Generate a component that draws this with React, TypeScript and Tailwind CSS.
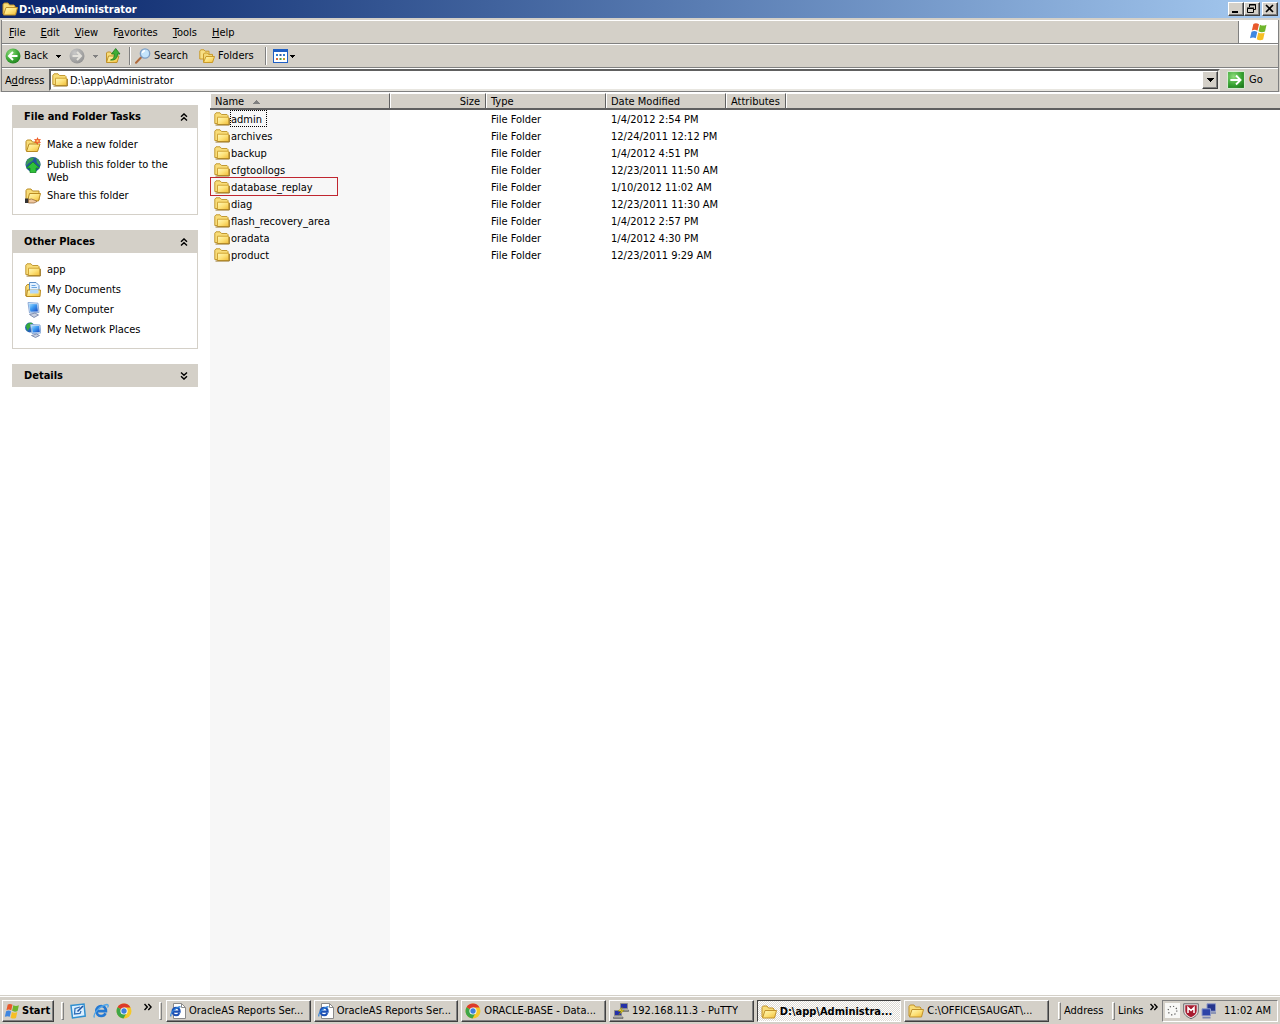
import { useState, type ReactNode } from "react";
import { clsx } from "clsx";

const RAISED =
  "border border-t-white border-l-white border-r-[#404040] border-b-[#404040] bg-[#d4d0c8] shadow-[inset_-1px_-1px_0_#808080]";

const MENUS = [
  ["", "F", "ile"],
  ["", "E", "dit"],
  ["", "V", "iew"],
  ["F", "a", "vorites"],
  ["", "T", "ools"],
  ["", "H", "elp"],
];

const FOLDERS = [
  { name: "admin", modified: "1/4/2012 2:54 PM", focused: true },
  { name: "archives", modified: "12/24/2011 12:12 PM" },
  { name: "backup", modified: "1/4/2012 4:51 PM" },
  { name: "cfgtoollogs", modified: "12/23/2011 11:50 AM" },
  { name: "database_replay", modified: "1/10/2012 11:02 AM", marked: true },
  { name: "diag", modified: "12/23/2011 11:30 AM" },
  { name: "flash_recovery_area", modified: "1/4/2012 2:57 PM" },
  { name: "oradata", modified: "1/4/2012 4:30 PM" },
  { name: "product", modified: "12/23/2011 9:29 AM" },
];

/* ---------- icons ---------- */

/** Gradients shared by every icon on the page. */
function IconDefs() {
  return (
    <svg width="0" height="0" className="absolute" aria-hidden>
      <defs>
        <linearGradient id="yellow" x1="0" y1="0" x2="1" y2="1">
          <stop offset="0" stopColor="#fff9bc" />
          <stop offset="0.5" stopColor="#fde27a" />
          <stop offset="1" stopColor="#efbb36" />
        </linearGradient>
        <radialGradient id="green" cx="0.35" cy="0.3" r="0.8">
          <stop offset="0" stopColor="#8fdc7c" />
          <stop offset="0.6" stopColor="#3aa534" />
          <stop offset="1" stopColor="#1d7a1c" />
        </radialGradient>
        <radialGradient id="grey" cx="0.35" cy="0.3" r="0.8">
          <stop offset="0" stopColor="#c8c8c8" />
          <stop offset="1" stopColor="#8f8f8f" />
        </radialGradient>
        <linearGradient id="screen" x1="0" y1="0" x2="1" y2="1">
          <stop offset="0" stopColor="#a8e0ff" />
          <stop offset="0.45" stopColor="#3f9cf2" />
          <stop offset="1" stopColor="#1648c0" />
        </linearGradient>
      </defs>
    </svg>
  );
}

function Icon({ children, className = "h-4 w-4" }: { children: ReactNode; className?: string }) {
  return (
    <svg viewBox="0 0 16 16" className={clsx("shrink-0", className)} fill="none" aria-hidden>
      {children}
    </svg>
  );
}

function FolderIcon() {
  return (
    <Icon>
      <path d="M.8 12.500V3.200L2 1.800h4l1.500 1.700H13l1 1v8z" fill="#f8dc78" stroke="#c29a34" />
      <path d="M3.500 6.200h11.300v7.300H3.500z" fill="url(#yellow)" stroke="#d0a436" />
      <path d="M1.500 14h13.800V7" stroke="#96701c" />
    </Icon>
  );
}

function OpenFolderIcon() {
  return (
    <Icon>
      <path d="M1 13V3.500L2.200 2H6l1.500 2H12l1 1v8z" fill="#f8dc78" stroke="#c0912a" />
      <path d="M4 6.500h11.500L13.500 14H1.500z" fill="url(#yellow)" stroke="#c0912a" />
    </Icon>
  );
}

function FoldersIcon() {
  return (
    <Icon>
      <path d="M.8 11V2.800L2 1.800h3l1.200 1.400H10V11z" fill="#f7df85" stroke="#c99a2a" />
      <path d="M4.500 14V6l1-1h3l1 1.400h4V14z" fill="#f3d877" stroke="#c99a2a" />
      <path d="M7 8.500h8.500L13.500 14.500h-9z" fill="url(#yellow)" stroke="#c99a2a" />
    </Icon>
  );
}

function NewFolderIcon() {
  return (
    <Icon>
      <path d="M1 13.500V4.500L2.200 3H6l1.500 2H12v8.500z" fill="#f8dc78" stroke="#b98b22" />
      <path d="M4 7h11l-2.500 7.500h-11z" fill="url(#yellow)" stroke="#b98b22" />
      <path d="M12.500 0l1 2.300 2.500-.3-1.500 2 1.500 2-2.600-.2-1 2.200-1-2.200-2.400.2 1.500-2L9 2l2.500.3z" fill="#ee5a24" />
      <circle cx="12.500" cy="4" r="1.200" fill="#ffc46a" />
    </Icon>
  );
}

function ShareFolderIcon() {
  return (
    <Icon>
      <path d="M1 13V2.500L2.200 1H6l1.500 2H14v9z" fill="#f8dc78" stroke="#b98b22" />
      <path d="M4.500 5.500H15.500L13.500 13H2.500z" fill="url(#yellow)" stroke="#b98b22" />
      <path d="M0 10.500h3.500v4.500H0z" fill="#333" />
      <path d="M3.500 11.500l3-.5 4 1.500 1.500 1-3 1.500H3.500z" fill="#f0c9a0" stroke="#8a5b2c" strokeWidth="0.700" />
    </Icon>
  );
}

function UpFolderIcon() {
  return (
    <Icon>
      <path d="M1.500 14V5l1-1h3l1 1.500H11V14z" fill="#f8dc78" stroke="#c0912a" />
      <path d="M3.500 8H14l-2 6.500H1.500z" fill="url(#yellow)" stroke="#c0912a" />
      <path d="M5.500 12c3-.5 4-3 3.800-6H6.500l4.200-5.500L15 6h-2.500c0 4-2 6.500-7 6z" fill="#3fae35" stroke="#1d7a1c" strokeWidth="0.800" />
    </Icon>
  );
}

function ArrowBall({ fill, flip }: { fill: string; flip?: boolean }) {
  return (
    <Icon>
      <circle cx="8" cy="8" r="7.500" fill={fill} />
      <path
        d={flip ? "M3.500 8H12M8 4l4 4-4 4" : "M12.500 8H4M8 4L4 8l4 4"}
        stroke={flip ? "#e4e2dc" : "#fff"}
        strokeWidth="2"
      />
    </Icon>
  );
}

function SearchIcon() {
  return (
    <Icon>
      <path d="M6 9.500L1 14.800" stroke="#b06a3c" strokeWidth="2" strokeLinecap="round" />
      <circle cx="10" cy="5.500" r="4.700" fill="#c4e4fb" stroke="#7f9fc4" strokeWidth="1.300" />
      <path d="M7.500 5a2.600 2.600 0 012.500-2.300" stroke="#fff" strokeWidth="1.500" />
    </Icon>
  );
}

function ViewsIcon() {
  return (
    <Icon>
      <rect x="0.5" y="1.5" width="14" height="13" fill="#fff" stroke="#1f5fc4" />
      <path d="M0 1h15v3H0z" fill="#1f5fc4" />
      <path d="M3 6h2v2H3zM10 6h2v2h-2z" fill="#2f7fd0" />
      <path d="M6.500 6h2v2h-2z" fill="#3a5a9c" />
      <path d="M3 10h2v2H3z" fill="#d86a3c" />
      <path d="M6.500 10h2v2h-2z" fill="#3fa045" />
      <path d="M10 10h2v2h-2z" fill="#c9a02a" />
    </Icon>
  );
}

function WindowsFlag({ className }: { className?: string }) {
  return (
    <Icon className={className}>
      <path d="M3.500 1.500C5 .6 6.500.8 8 1.700L6.800 7C5.300 6 3.900 6 2.300 6.800z" fill="#e8592b" />
      <path d="M8.800 2.200c1.600.9 3.300.9 5.200 0L12.800 7.500c-1.800.9-3.500.8-5.200-.1z" fill="#6fb52c" />
      <path d="M2 7.800c1.600-.9 3.200-.8 4.600.1L5.400 13C4 12.200 2.500 12.200.8 13z" fill="#3f87e0" />
      <path d="M7.400 8.400c1.700.9 3.300.9 5.100.1L11.300 14c-1.800.9-3.500.8-5.100-.2z" fill="#f6bf25" />
    </Icon>
  );
}

function GlobeUpIcon() {
  return (
    <Icon>
      <circle cx="8" cy="7.500" r="7.500" fill="#24569c" />
      <path d="M1.500 4C3.500 1 7 .2 9 .7L7.500 4 4 6 .8 9zM11 1c3 1.500 4.800 4.500 4.400 8l-3.400-3z" fill="#3a9c56" />
      <path d="M8 5l6.500 6H11v4.500H5V11H1.500z" fill="#30c03a" stroke="#128a1e" strokeWidth="0.800" />
    </Icon>
  );
}

function DocumentsIcon() {
  return (
    <Icon>
      <path d="M.8 14V4.500l1.500-2H6V14z" fill="#f8dc78" stroke="#b98b22" />
      <path d="M4.500.5H11l3 3V10H4.500z" fill="#e4f2ff" stroke="#5c8fc8" />
      <path d="M6.500 3.500h4M6.500 5.500h5.500" stroke="#6aa5e0" />
      <path d="M2.500 8h13l-.500 6.500H1.500z" fill="url(#yellow)" stroke="#b98b22" />
      <path d="M5 7.500h8.500v4H5z" fill="#b4d8f8" />
    </Icon>
  );
}

function ComputerIcon() {
  return (
    <Icon>
      <path d="M3 .5l10 .7 1 9.300-9.500.5z" fill="#dce8f8" stroke="#8cacd8" />
      <path d="M4 1.700l8.100.5.800 7.200-7.500.4z" fill="url(#screen)" />
      <path d="M4.500 12.500l5.500-1.500 3.500 2-4.500 2.500z" fill="#c8d0e0" stroke="#6c7ca4" strokeWidth="0.800" />
    </Icon>
  );
}

function NetworkIcon() {
  return (
    <Icon>
      <circle cx="5" cy="5.500" r="4.900" fill="#2462b8" />
      <path d="M.8 4C2.500.8 5 .2 7.500 1.200L5.500 4.500 2.500 9z" fill="#36a83c" />
      <path d="M5.500 2.500l9.500.5.800 8-8.800.5z" fill="#dce8f8" stroke="#8cacd8" />
      <path d="M6.500 3.500l7.700.4.600 6.200-7.100.4z" fill="url(#screen)" />
      <path d="M6.500 13.500l5-1.500 3 1.500-4 2z" fill="#c8d0e0" stroke="#6c7ca4" strokeWidth="0.800" />
    </Icon>
  );
}

function IeIcon() {
  return (
    <Icon>
      <path d="M3.700 8.200h9.200C13 5 11 3 8.200 3 5.500 3 3.400 5.200 3.400 8s2 5 4.800 5c2.100 0 3.600-1 4.300-2.700" stroke="#2478d2" strokeWidth="2.700" />
      <path d="M1.500 14.500C-.5 12 5.500 3 14 1.500c1.500 0 1.500 1.500.5 3" stroke="#4fa4e8" strokeWidth="1.300" />
    </Icon>
  );
}

function IeDocIcon() {
  return (
    <Icon>
      <path d="M3.500.5h8l4 4v11h-12z" fill="#fff" stroke="#8a8a8a" />
      <path d="M11.500.5v4h4" stroke="#8a8a8a" />
      <g transform="translate(0 2.500) scale(0.750)">
        <path d="M3.700 8.200h9.200C13 5 11 3 8.200 3 5.500 3 3.400 5.200 3.400 8s2 5 4.800 5c2.100 0 3.600-1 4.300-2.700" stroke="#1c50b4" strokeWidth="2.800" />
        <path d="M1.500 14.500C-.5 12 5.500 3 14 1.500" stroke="#2d7fd6" strokeWidth="1.600" />
      </g>
    </Icon>
  );
}

function ShowDesktopIcon() {
  return (
    <Icon>
      <path d="M1 2.500L14 1l1.200 12L2.500 15z" fill="#dcefff" stroke="#2f8fd0" strokeWidth="1.500" />
      <path d="M10 4L5 5.500 4.500 11l5.500-.5L11 8" stroke="#2f6fb8" strokeWidth="1.300" />
      <path d="M7.500 8.500L13 3" stroke="#1c50a0" strokeWidth="1.600" />
    </Icon>
  );
}

function ChromeIcon() {
  return (
    <Icon>
      <circle cx="8" cy="8" r="7.500" fill="#f5c928" />
      <path d="M8 8L1.500 4.200A7.500 7.500 0 0114.500 4.500H8z" fill="#dc3a2b" />
      <path d="M8 8L1.500 4.250A7.500 7.500 0 007.500 15.500L10.500 10z" fill="#3fa648" />
      <circle cx="8" cy="8" r="3.600" fill="#fff" />
      <circle cx="8" cy="8" r="2.700" fill="#3f80dc" />
    </Icon>
  );
}

function PuttyIcon() {
  return (
    <Icon>
      <path d="M7.500.5h7v5h-7z" fill="#2430a8" stroke="#8a8a8a" />
      <path d="M7 7h8.500v1.500H7z" fill="#a8a8a8" stroke="#444" strokeWidth="0.500" />
      <path d="M1.500 7.500h7v5h-7z" fill="#2430a8" stroke="#8a8a8a" />
      <path d="M.5 14H10v1.500H.5z" fill="#a8a8a8" stroke="#444" strokeWidth="0.500" />
      <path d="M9.500 4L5 8.300h3.300L5.500 12l5.700-4.700H8z" fill="#ffe81c" stroke="#6d6208" strokeWidth="0.400" />
    </Icon>
  );
}

function TrayLoadingIcon() {
  return (
    <Icon>
      <path d="M0 0h15v15H0z" fill="#f8f8f6" />
      <circle cx="7.500" cy="7.500" r="4.300" stroke="#5a5a5a" strokeWidth="1.200" strokeDasharray="1.200 2.180" />
    </Icon>
  );
}

function ShieldIcon() {
  return (
    <Icon>
      <path d="M.7.800h14.600V8c0 3.500-3.300 6-7.300 7.700C4 14 .7 11.500.7 8z" fill="#f0e8e8" stroke="#6a6a6e" />
      <path d="M2.300 2.300h11.400V8c0 2.500-2.200 4.700-5.700 6.200C4.500 12.700 2.300 10.500 2.300 8z" fill="#a81c30" />
      <path d="M5 10V4.500l3 3 3-3V10" stroke="#fff" strokeWidth="1.500" />
    </Icon>
  );
}

function TrayNetworkIcon() {
  return (
    <Icon>
      <path d="M6 .8h8.500v7.400H6z" fill="#24348c" stroke="#8c98c8" />
      <path d="M9 10h6" stroke="#7c88b0" strokeWidth="1.600" />
      <path d="M1 5.800h8.500v7H1z" fill="#2c44a8" stroke="#8c98c8" />
      <path d="M1.500 14.700h8" stroke="#7c88b0" strokeWidth="1.600" />
    </Icon>
  );
}

function DownArrow({ className = "fill-black" }: { className?: string }) {
  return (
    <svg viewBox="0 0 7 4" className={clsx("h-1 w-[7px] shrink-0", className)} shapeRendering="crispEdges" aria-hidden>
      <path d="M0 0h7v1H0zM1 1h5v1H1zM2 2h3v1H2zM3 3h1v1H3z" />
    </svg>
  );
}

function Chevrons({ className }: { className?: string }) {
  return (
    <svg viewBox="0 0 8 8" className={clsx("h-2 w-2 shrink-0", className)} fill="none" stroke="#000" strokeWidth="1.400" aria-hidden>
      <path d="M1 3.700L4 .9l3 2.800M1 7.500l3-2.800 3 2.800" />
    </svg>
  );
}

/* ---------- window chrome ---------- */

function CaptionButton({ label, className, children }: { label: string; className?: string; children: ReactNode }) {
  return (
    <button type="button" aria-label={label} className={clsx("grid h-[14px] w-4 place-items-center", RAISED, className)}>
      <svg viewBox="0 0 12 10" className="h-[10px] w-3" fill="none" stroke="#000" aria-hidden>
        {children}
      </svg>
    </button>
  );
}

function TitleBar() {
  return (
    <header className="flex h-[18px] items-center bg-linear-to-r from-[#0a246a] to-[#a6caf0] px-[2px]">
      <OpenFolderIcon />
      <h1 className="ml-px flex-1 pt-px text-[11px] font-bold text-white">D:\app\Administrator</h1>
      <CaptionButton label="Minimize">
        <path d="M2 8h6" strokeWidth="2" />
      </CaptionButton>
      <CaptionButton label="Restore">
        <path d="M3.500 3V.500h6v5H7.500M3 1h7M1.500 4.500h6v4h-6zM1 4h7" />
      </CaptionButton>
      <CaptionButton label="Close" className="ml-[2px]">
        <path d="M2 1l7 7M9 1L2 8" strokeWidth="1.600" />
      </CaptionButton>
    </header>
  );
}

const BAND = "flex h-6 items-center border-t border-b border-t-white border-b-[#808080]";

function MenuBar() {
  return (
    <div className={BAND}>
      <nav className="flex flex-1 gap-[15px] pt-[2px] pl-[7px]">
        {MENUS.map(([before, key, after]) => (
          <button key={before + key + after} type="button">
            {before}
            <span className="underline">{key}</span>
            {after}
          </button>
        ))}
      </nav>
      <div className="grid h-full w-10 place-items-center border-l border-[#808080] bg-white">
        <WindowsFlag className="h-5 w-5" />
      </div>
    </div>
  );
}

function Divider() {
  return <span className="h-[18px] w-[2px] border-r border-l border-r-white border-l-[#808080]" />;
}

function Toolbar() {
  return (
    <div className={clsx(BAND, "pl-[3px]")}>
      <button type="button" className="flex w-[43px] items-center gap-[3px] whitespace-nowrap">
        <ArrowBall fill="url(#green)" />
        Back
      </button>
      <button type="button" aria-label="Back history" className="ml-[7px]">
        <DownArrow className="h-[3px] w-[5px] fill-black" />
      </button>
      <button type="button" aria-label="Forward" disabled className="ml-[7px]">
        <ArrowBall fill="url(#grey)" flip />
      </button>
      <button type="button" aria-label="Forward history" disabled className="ml-[7px]">
        <DownArrow className="h-[3px] w-[5px] fill-[#808080]" />
      </button>
      <button type="button" aria-label="Up" className="mr-2 ml-[6px]">
        <UpFolderIcon />
      </button>
      <Divider />
      <button type="button" className="ml-1 flex w-[53px] items-center gap-[3px] whitespace-nowrap">
        <SearchIcon />
        Search
      </button>
      <button type="button" className="mr-[10px] ml-[11px] flex w-[56px] items-center gap-[3px] whitespace-nowrap">
        <FoldersIcon />
        Folders
      </button>
      <Divider />
      <button type="button" aria-label="Views" className="ml-[6px] flex items-center">
        <ViewsIcon />
        <DownArrow className="h-[3px] w-[5px] fill-black" />
      </button>
    </div>
  );
}

function AddressBar() {
  const [path, setPath] = useState("D:\\app\\Administrator");
  return (
    <form className={clsx(BAND, "pl-[3px]")} onSubmit={(e) => e.preventDefault()}>
      <label htmlFor="address" className="w-[44px] pt-px whitespace-nowrap">
        A<span className="underline">d</span>dress
      </label>
      <div className="flex h-[22px] flex-1 items-center border-2 border-t-[#606060] border-r-[#e8e6e0] border-b-[#e8e6e0] border-l-[#606060] bg-white pl-px">
        <FolderIcon />
        <input
          id="address"
          value={path}
          onChange={(e) => setPath(e.target.value)}
          className="ml-[2px] min-w-0 flex-1 pt-[2px] outline-none"
        />
        <button type="button" aria-label="Address history" className={clsx("grid h-full w-4 place-items-center", RAISED)}>
          <DownArrow />
        </button>
      </div>
      <button type="submit" className="ml-[7px] flex w-[51px] items-center gap-1">
        <Icon className="h-[18px] w-[18px]">
          <path d="M.5.5h15v15H.5z" fill="url(#green)" stroke="#e4f4e0" strokeWidth="0.800" />
          <path d="M3 8h9M8 4l4 4-4 4" stroke="#fff" strokeWidth="1.700" />
        </Icon>
        Go
      </button>
    </form>
  );
}

/* ---------- task pane ---------- */

function Panel({ title, collapsed, children }: { title: string; collapsed?: boolean; children?: ReactNode }) {
  return (
    <section>
      <h2>
        <button type="button" className="flex h-[23px] w-full items-center justify-between bg-[#d4d0c8] pt-px pr-[10px] pl-3 text-[11px] font-bold">
          {title}
          <Chevrons className={collapsed ? "rotate-180" : ""} />
        </button>
      </h2>
      {children && (
        <ul className="space-y-1 border border-t-0 border-[#d4d0c8] px-3 pt-[9px] pb-[10px]">{children}</ul>
      )}
    </section>
  );
}

function Task({ icon, children }: { icon: ReactNode; children: ReactNode }) {
  return (
    <li>
      <a href="#" className="flex gap-[6px]">
        {icon}
        <span className="w-[124px] pt-px leading-[13px]">{children}</span>
      </a>
    </li>
  );
}

function TaskPane() {
  return (
    <aside className="w-[210px] shrink-0 space-y-[15px] px-3 pt-[13px]">
      <Panel title="File and Folder Tasks">
        <Task icon={<NewFolderIcon />}>Make a new folder</Task>
        <Task icon={<GlobeUpIcon />}>Publish this folder to the Web</Task>
        <Task icon={<ShareFolderIcon />}>Share this folder</Task>
      </Panel>
      <Panel title="Other Places">
        <Task icon={<FolderIcon />}>app</Task>
        <Task icon={<DocumentsIcon />}>My Documents</Task>
        <Task icon={<ComputerIcon />}>My Computer</Task>
        <Task icon={<NetworkIcon />}>My Network Places</Task>
      </Panel>
      <Panel title="Details" collapsed />
    </aside>
  );
}

/* ---------- file list ---------- */

const TH =
  "h-[17px] border-t border-r border-b-2 border-t-white border-r-[#606060] border-b-[#606060] bg-[#d4d0c8] px-[5px] pt-[2px] pb-0 text-left font-normal shadow-[inset_1px_0_0_#fff]";
const TD = "p-0 pt-[2px]";

function FileList() {
  return (
    <main className="min-w-0 flex-1 bg-[linear-gradient(#f7f7f7,#f7f7f7)] bg-[length:180px_100%] bg-no-repeat pt-px">
      <table className="w-full table-fixed border-separate border-spacing-0">
        <colgroup>
          <col className="w-[180px]" />
          <col className="w-[96px]" />
          <col className="w-[120px]" />
          <col className="w-[120px]" />
          <col className="w-[60px]" />
          <col />
        </colgroup>
        <thead>
          <tr className="leading-[12px] whitespace-nowrap">
            <th className={TH}>
              <span className="flex items-center gap-[9px]">
                Name
                <DownArrow className="rotate-180 fill-[#808080]" />
              </span>
            </th>
            <th className={clsx(TH, "text-right")}>Size</th>
            <th className={TH}>Type</th>
            <th className={TH}>Date Modified</th>
            <th className={TH}>Attributes</th>
            <td className={clsx(TH, "border-r-0")} />
          </tr>
        </thead>
        <tbody>
          {FOLDERS.map((f) => (
            <tr key={f.name} className="h-[17px] leading-[15px] whitespace-nowrap">
              <td className="relative p-0 pl-1">
                <span className="flex items-center">
                  <FolderIcon />
                  <span className={clsx("h-[17px] pt-[2px] pr-[5px] pl-px", f.focused && "outline-1 -outline-offset-1 outline-dotted outline-black")}>
                    {f.name}
                  </span>
                </span>
                {f.marked && (
                  <span className="absolute -top-px left-0 h-[19px] w-32 border border-solid border-t-[#c02630] border-r-[#c02630] border-b-[#c02630] border-l-[#c02630]" />
                )}
              </td>
              <td className={TD} />
              <td className={clsx(TD, "pl-[5px]")}>File Folder</td>
              <td className={clsx(TD, "pl-[5px]")}>{f.modified}</td>
              <td className={TD} />
              <td className={TD} />
            </tr>
          ))}
        </tbody>
      </table>
    </main>
  );
}

/* ---------- taskbar ---------- */

function TaskButton({ icon, active, children }: { icon: ReactNode; active?: boolean; children: string }) {
  return (
    <button
      type="button"
      className={clsx(
        "flex h-[22px] min-w-0 flex-1 items-center gap-[3px] px-[3px]",
        active
          ? "border border-t-[#404040] border-r-white border-b-white border-l-[#404040] bg-[repeating-conic-gradient(#fff_0_25%,#dedbd4_0_50%)] bg-[length:2px_2px] pt-px font-bold"
          : RAISED
      )}
    >
      {icon}
      <span className="truncate">{children}</span>
    </button>
  );
}

function Grip() {
  return <span className="h-[18px] w-[3px] shrink-0 border border-t-white border-r-[#808080] border-b-[#808080] border-l-white" />;
}

function Taskbar() {
  return (
    <footer className="flex h-7 items-center border-t border-t-white bg-[#d4d0c8] px-[2px] pt-px shadow-[0_-1px_0_#d4d0c8]">
      <button type="button" className={clsx("flex h-[22px] w-[52px] items-center gap-px pl-px font-bold", RAISED)}>
        <WindowsFlag className="h-[17px] w-[17px]" />
        Start
      </button>
      <div className="ml-[7px] flex w-[98px] items-center">
        <Grip />
        <div className="ml-[6px] flex gap-[7px]">
          <button type="button" aria-label="Show Desktop"><ShowDesktopIcon /></button>
          <button type="button" aria-label="Internet Explorer"><IeIcon /></button>
          <button type="button" aria-label="Google Chrome"><ChromeIcon /></button>
        </div>
        <button type="button" aria-label="More shortcuts" className="mb-2 ml-3">
          <Chevrons className="rotate-90" />
        </button>
      </div>
      <Grip />
      <div className="ml-1 flex min-w-0 flex-1 gap-[3px]">
        <TaskButton icon={<IeDocIcon />}>OracleAS Reports Ser...</TaskButton>
        <TaskButton icon={<IeDocIcon />}>OracleAS Reports Ser...</TaskButton>
        <TaskButton icon={<ChromeIcon />}>ORACLE-BASE - Data...</TaskButton>
        <TaskButton icon={<PuttyIcon />}>192.168.11.3 - PuTTY</TaskButton>
        <TaskButton icon={<OpenFolderIcon />} active>D:\app\Administra...</TaskButton>
        <TaskButton icon={<OpenFolderIcon />}>C:\OFFICE\SAUGAT\...</TaskButton>
      </div>
      <div className="ml-[9px] flex w-[54px] items-center gap-[3px]">
        <Grip />
        Address
      </div>
      <div className="flex w-[50px] items-center gap-[3px]">
        <Grip />
        Links
        <button type="button" aria-label="More links" className="mb-2 ml-1">
          <Chevrons className="rotate-90" />
        </button>
      </div>
      <div className="flex h-[22px] w-[116px] items-center gap-[2px] border border-t-[#808080] border-r-white border-b-white border-l-[#808080] pl-[2px]">
        <TrayLoadingIcon />
        <ShieldIcon />
        <TrayNetworkIcon />
        <time className="flex-1 pr-[6px] text-right">11:02 AM</time>
      </div>
    </footer>
  );
}

export default function App() {
  return (
    <div className="flex h-screen flex-col bg-white font-['DejaVu_Sans_Condensed','DejaVu_Sans',sans-serif] text-[11px] leading-[14px] text-black">
      <IconDefs />
      <TitleBar />
      <div className="border-x border-t-2 border-[#d4d0c8] bg-[#d4d0c8]">
        <div className="border-x border-[#808080]">
          <MenuBar />
          <Toolbar />
          <AddressBar />
        </div>
      </div>
      <div className="flex min-h-0 flex-1">
        <TaskPane />
        <FileList />
      </div>
      <Taskbar />
    </div>
  );
}
